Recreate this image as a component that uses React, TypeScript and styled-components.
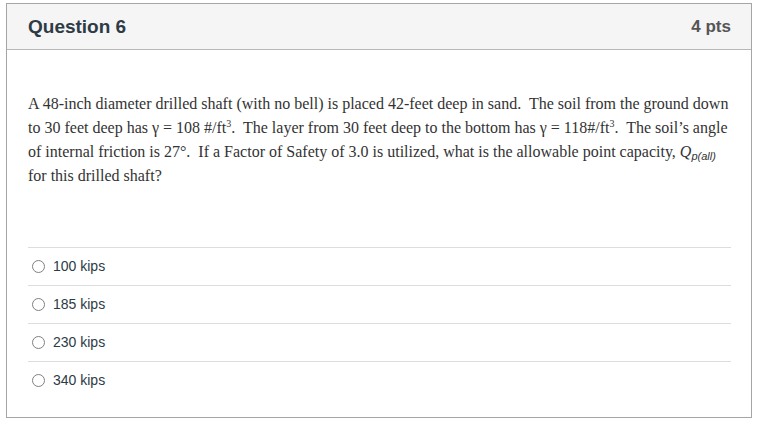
import React from "react";
import styled, { createGlobalStyle } from "styled-components";

const GlobalStyle = createGlobalStyle`
  html, body {
    margin: 0;
    padding: 0;
    background: #ffffff;
  }
  body {
    font-family: "Liberation Sans", Arial, sans-serif;
  }
`;

const Page = styled.div`
  padding: 3px 8px 7px 6px;
`;

const QuestionBox = styled.div`
  border: 1px solid #a5a5a5;
  background: #fff;
  height: 415px;
  box-sizing: border-box;
`;

const Header = styled.div`
  display: flex;
  justify-content: space-between;
  align-items: center;
  height: 45px;
  padding: 0 20px 0 21px;
  background: #f5f5f5;
  border-bottom: 1px solid #b8b8b8;
`;

const Title = styled.h2`
  margin: 0;
  font-size: 19px;
  font-weight: 700;
  color: #2d3b45;
`;

const Points = styled.div`
  font-size: 17px;
  font-weight: 700;
  color: #555555;
`;

const Body = styled.div`
  padding: 42px 20px 0 21px;
`;

const Text = styled.p`
  margin: 0;
  font-family: "Liberation Serif", "Times New Roman", serif;
  font-size: 16px;
  line-height: 24px;
  color: #333333;
`;

const Sup = styled.sup`
  font-size: 10px;
  line-height: 0;
  vertical-align: 6px;
`;

const Q = styled.i`
  font-size: 16px;
`;

const Sub = styled.sub`
  font-family: "Liberation Sans", Arial, sans-serif;
  font-size: 11px;
  font-style: italic;
  line-height: 0;
  vertical-align: -3px;
`;

const Answers = styled.div`
  margin-top: 59px;
  border-top: 1px solid #dddddd;
`;

const Answer = styled.label`
  display: flex;
  align-items: center;
  height: 35px;
  padding: 0 0 2px 4px;
  border-bottom: 1px solid #dddddd;
  font-size: 14px;
  color: #2d3b45;
  &:last-child {
    border-bottom: none;
  }
`;

const Radio = styled.span`
  width: 11px;
  height: 11px;
  border: 1px solid #808080;
  border-radius: 50%;
  margin-right: 8px;
  margin-top: 2px;
`;

const answers = ["100 kips", "185 kips", "230 kips", "340 kips"];

export default function App() {
  return (
    <>
      <GlobalStyle />
      <Page>
        <QuestionBox>
          <Header>
            <Title>Question 6</Title>
            <Points>4 pts</Points>
          </Header>
          <Body>
            <Text>
              A 48-inch diameter drilled shaft (with no bell) is placed 42-feet
              deep in sand.&nbsp; The soil from the ground down to 30 feet deep
              has γ = 108 #/ft<Sup>3</Sup>.&nbsp; The layer from 30 feet deep to
              the bottom has γ = 118#/ft<Sup>3</Sup>.&nbsp; The soil’s angle of
              internal friction is 27°.&nbsp; If a Factor of Safety of 3.0 is
              utilized, what is the allowable point capacity, <Q>Q</Q>
              <Sub>p(all)</Sub> for this drilled shaft?
            </Text>
            <Answers>
              {answers.map((a) => (
                <Answer key={a}>
                  <Radio />
                  {a}
                </Answer>
              ))}
            </Answers>
          </Body>
        </QuestionBox>
      </Page>
    </>
  );
}
